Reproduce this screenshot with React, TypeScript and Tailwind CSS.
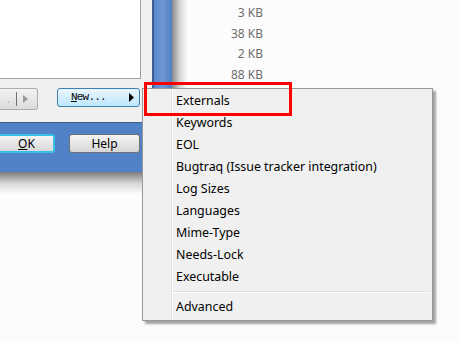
const menuItems = [
  "Externals",
  "Keywords",
  "EOL",
  "Bugtraq (Issue tracker integration)",
  "Log Sizes",
  "Languages",
  "Mime-Type",
  "Needs-Lock",
  "Executable",
];

const sizes = ["3 KB", "38 KB", "2 KB", "88 KB"];

const font = { fontFamily: '"Noto Sans", "Open Sans", sans-serif' };

const App = () => {
  return (
    <div
      className="relative w-[459px] h-[342px] overflow-hidden bg-[#fcfcfc] text-[12px] text-black"
      style={font}
    >
      <div className="flex">
        {/* dialog window (partly visible) */}
        <div className="flex flex-col">
          <div className="flex">
            <div className="w-[172px] h-[172px] flex flex-col bg-[#5181c6]">
              <div className="flex h-[123px]">
                <div className="w-[152px] flex flex-col bg-[#f0f0f0] border-b border-[#3f5f8f]">
                  <div className="w-[141px] h-[79px] bg-white border-r border-b border-[#a0a0a0]" />
                  <div className="flex items-start pt-[9px] gap-[19px]">
                    <div className="w-[38px] h-[22px] flex items-center justify-end gap-[6px] pr-[9px] rounded-r-[3px] border border-l-0 border-[#adadad] bg-gradient-to-b from-[#f2f2f2] to-[#dcdcdc] text-[#a0a0a0]">
                      <span className="text-[10px] leading-none">.</span>
                      <span className="w-px h-[14px] bg-[#707070]" />
                      <svg width="5" height="8" viewBox="0 0 5 8">
                        <path d="M0 0 L5 4 L0 8 Z" fill="#9a9a9a" />
                      </svg>
                    </div>
                    <div className="w-[83px] h-[19px] flex items-center justify-between pl-[13px] pr-[5px] rounded-[3px] border border-[#3c7fb1] bg-gradient-to-b from-[#eaf6fd] to-[#bee6fd]">
                      <span
                        className="text-[11px] tracking-[-0.8px]"
                        style={{ fontFamily: '"Liberation Mono", monospace' }}
                      >
                        <span className="underline">N</span>ew...
                      </span>
                      <svg width="5" height="9" viewBox="0 0 5 9">
                        <path d="M0 0 L5 4.5 L0 9 Z" fill="#000" />
                      </svg>
                    </div>
                  </div>
                </div>
                <div className="flex-1 border-l-2 border-[#3d5f93] bg-gradient-to-r from-[#5a88cc] via-[#6f98d4] to-[#4f7ec3]" />
              </div>
              <div className="flex items-start pt-[11px] gap-[14px]">
                <div className="w-[55px] h-[19px] flex items-center justify-center rounded-r-[3px] border-2 border-l-0 border-[#38c1e8] bg-gradient-to-b from-[#f4f4f4] to-[#d8d8d8]">
                  <span className="underline decoration-1">O</span>K
                </div>
                <div className="w-[71px] h-[19px] flex items-center justify-center rounded-[3px] border border-[#707070] bg-gradient-to-b from-[#f4f4f4] to-[#d6d6d6]">
                  Help
                </div>
              </div>
            </div>
            <div className="w-[16px] h-[172px] bg-gradient-to-r from-[#8a8a8a] via-[#d8d8d8] to-[#fcfcfc]" />
          </div>
          <div className="w-[188px] h-[22px] bg-gradient-to-b from-[#7c7c7c] via-[#d6d6d6] to-[#fcfcfc]" />
        </div>

        {/* file size column in the window behind */}
        <div className="w-[75px] flex flex-col items-end pt-[3px] text-[#6f6f6f]">
          {sizes.map((s) => (
            <div key={s} className="h-[20.6px] leading-[20px]">
              {s}
            </div>
          ))}
        </div>
      </div>

      {/* context menu */}
      <div className="absolute left-[142px] top-[88px] w-[291px] h-[233px] border border-[#979797] bg-[#f0f0f0] text-[12.4px] shadow-[3px_3px_2px_rgba(0,0,0,0.35)]">
        <div className="absolute left-[28px] top-0 bottom-0 w-[2px] border-l border-[#e2e3e3] bg-white" />
        <div className="relative flex flex-col pt-[1px]">
          {menuItems.map((item) => (
            <div key={item} className="h-[22px] leading-[22px] pl-[33px]">
              {item}
            </div>
          ))}
          <div className="ml-[30px] mr-[2px] my-[3px] h-[2px] border-t border-[#e0e0e0] bg-white" />
          <div className="h-[22px] leading-[22px] pl-[33px]">Advanced</div>
        </div>
      </div>

      {/* red highlight */}
      <div className="absolute left-[144px] top-[82px] w-[148px] h-[34px] border-[3px] border-[#ff0000]" />
    </div>
  );
};

export default App;
